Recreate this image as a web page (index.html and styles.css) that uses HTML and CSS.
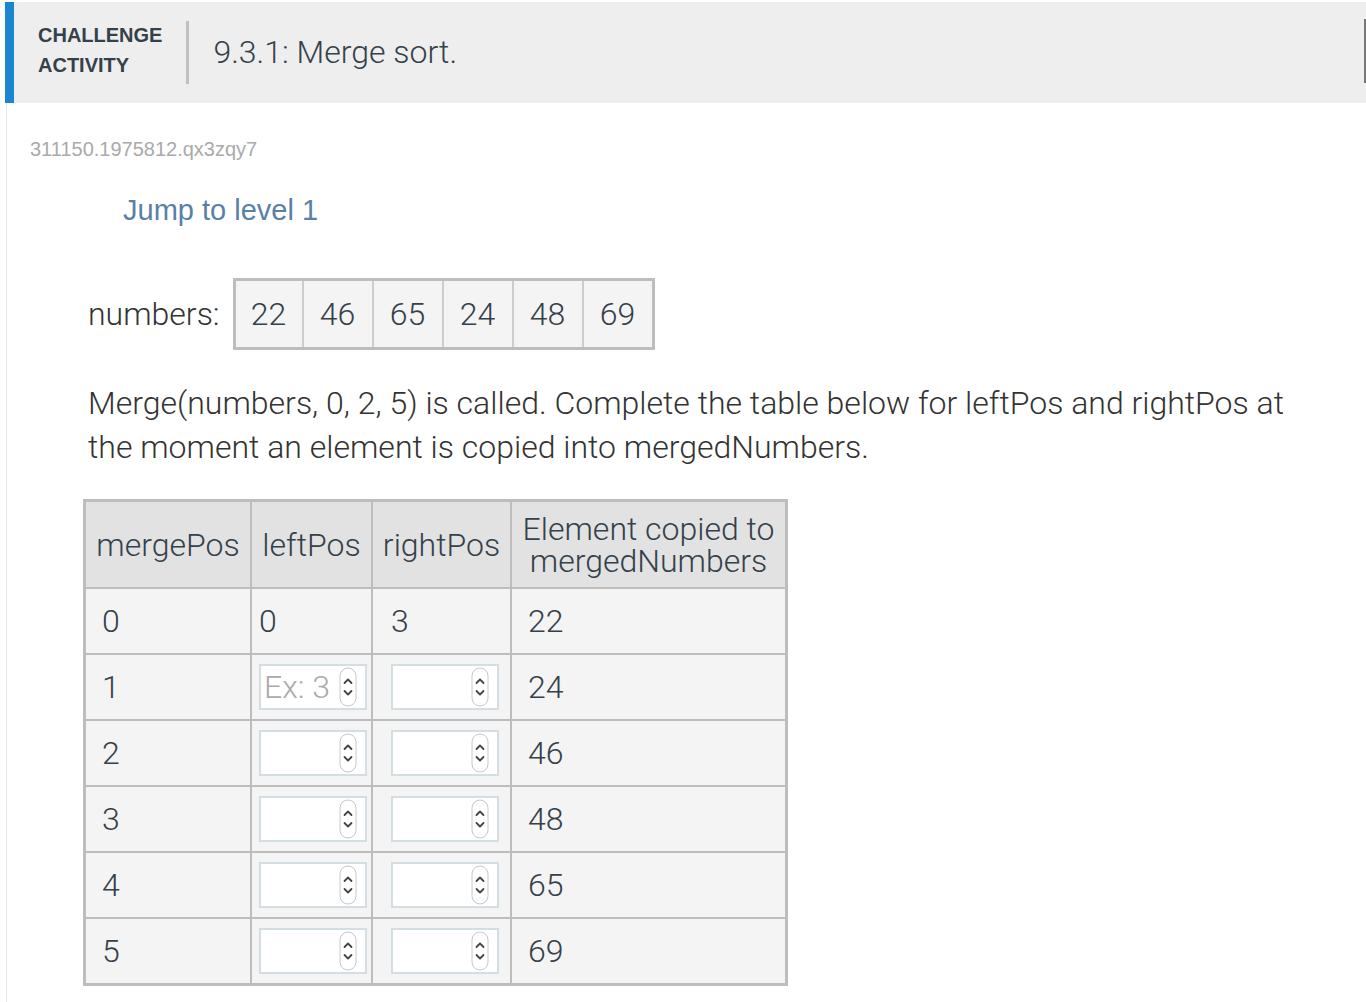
FILE: index.html
```html
<!DOCTYPE html>
<html>
<head>
<meta charset="utf-8">
<link rel="stylesheet" href="styles.css">
</head>
<body>
<div class="page">
  <header class="head">
    <div class="kind">CHALLENGE<br>ACTIVITY</div>
    <div class="sep"></div>
    <h1 class="title">9.3.1: Merge sort.</h1>
    <div class="edge"></div>
  </header>
  <section class="card">
    <div class="code">311150.1975812.qx3zqy7</div>
    <a class="jump">Jump to level 1</a>
    <div class="arr-row">
      <span class="arr-label">numbers:</span>
      <div class="arr">
        <div class="cell">22</div><div class="cell">46</div><div class="cell">65</div><div class="cell">24</div><div class="cell">48</div><div class="cell">69</div>
      </div>
    </div>
    <p class="prompt">Merge(numbers, 0, 2, 5) is called. Complete the table below for leftPos and rightPos at the moment an element is copied into mergedNumbers.</p>
    <table class="tbl">
      <thead>
        <tr><th class="c1">mergePos</th><th class="c2">leftPos</th><th class="c3">rightPos</th><th class="c4"><span class="hl">Element copied to</span><span class="hl">mergedNumbers</span></th></tr>
      </thead>
      <tbody>
        <tr><td>0</td><td>0</td><td>3</td><td>22</td></tr>
        <tr><td>1</td>
          <td><div class="num"><input type="text" placeholder="Ex: 3"><svg class="spin" width="18" height="40" viewBox="0 0 18 40"><rect x="1" y="1" width="16" height="38" rx="8" fill="#fff" stroke="#c8c8c8"/><path d="M5.5 16 L9 12.5 L12.5 16" fill="none" stroke="#444" stroke-width="1.8" stroke-linecap="round" stroke-linejoin="round"/><path d="M5.5 24 L9 27.5 L12.5 24" fill="none" stroke="#444" stroke-width="1.8" stroke-linecap="round" stroke-linejoin="round"/></svg></div></td>
          <td><div class="num"><input type="text"><svg class="spin" width="18" height="40" viewBox="0 0 18 40"><rect x="1" y="1" width="16" height="38" rx="8" fill="#fff" stroke="#c8c8c8"/><path d="M5.5 16 L9 12.5 L12.5 16" fill="none" stroke="#444" stroke-width="1.8" stroke-linecap="round" stroke-linejoin="round"/><path d="M5.5 24 L9 27.5 L12.5 24" fill="none" stroke="#444" stroke-width="1.8" stroke-linecap="round" stroke-linejoin="round"/></svg></div></td>
          <td>24</td></tr>
        <tr><td>2</td>
          <td><div class="num"><input type="text"><svg class="spin" width="18" height="40" viewBox="0 0 18 40"><rect x="1" y="1" width="16" height="38" rx="8" fill="#fff" stroke="#c8c8c8"/><path d="M5.5 16 L9 12.5 L12.5 16" fill="none" stroke="#444" stroke-width="1.8" stroke-linecap="round" stroke-linejoin="round"/><path d="M5.5 24 L9 27.5 L12.5 24" fill="none" stroke="#444" stroke-width="1.8" stroke-linecap="round" stroke-linejoin="round"/></svg></div></td>
          <td><div class="num"><input type="text"><svg class="spin" width="18" height="40" viewBox="0 0 18 40"><rect x="1" y="1" width="16" height="38" rx="8" fill="#fff" stroke="#c8c8c8"/><path d="M5.5 16 L9 12.5 L12.5 16" fill="none" stroke="#444" stroke-width="1.8" stroke-linecap="round" stroke-linejoin="round"/><path d="M5.5 24 L9 27.5 L12.5 24" fill="none" stroke="#444" stroke-width="1.8" stroke-linecap="round" stroke-linejoin="round"/></svg></div></td>
          <td>46</td></tr>
        <tr><td>3</td>
          <td><div class="num"><input type="text"><svg class="spin" width="18" height="40" viewBox="0 0 18 40"><rect x="1" y="1" width="16" height="38" rx="8" fill="#fff" stroke="#c8c8c8"/><path d="M5.5 16 L9 12.5 L12.5 16" fill="none" stroke="#444" stroke-width="1.8" stroke-linecap="round" stroke-linejoin="round"/><path d="M5.5 24 L9 27.5 L12.5 24" fill="none" stroke="#444" stroke-width="1.8" stroke-linecap="round" stroke-linejoin="round"/></svg></div></td>
          <td><div class="num"><input type="text"><svg class="spin" width="18" height="40" viewBox="0 0 18 40"><rect x="1" y="1" width="16" height="38" rx="8" fill="#fff" stroke="#c8c8c8"/><path d="M5.5 16 L9 12.5 L12.5 16" fill="none" stroke="#444" stroke-width="1.8" stroke-linecap="round" stroke-linejoin="round"/><path d="M5.5 24 L9 27.5 L12.5 24" fill="none" stroke="#444" stroke-width="1.8" stroke-linecap="round" stroke-linejoin="round"/></svg></div></td>
          <td>48</td></tr>
        <tr><td>4</td>
          <td><div class="num"><input type="text"><svg class="spin" width="18" height="40" viewBox="0 0 18 40"><rect x="1" y="1" width="16" height="38" rx="8" fill="#fff" stroke="#c8c8c8"/><path d="M5.5 16 L9 12.5 L12.5 16" fill="none" stroke="#444" stroke-width="1.8" stroke-linecap="round" stroke-linejoin="round"/><path d="M5.5 24 L9 27.5 L12.5 24" fill="none" stroke="#444" stroke-width="1.8" stroke-linecap="round" stroke-linejoin="round"/></svg></div></td>
          <td><div class="num"><input type="text"><svg class="spin" width="18" height="40" viewBox="0 0 18 40"><rect x="1" y="1" width="16" height="38" rx="8" fill="#fff" stroke="#c8c8c8"/><path d="M5.5 16 L9 12.5 L12.5 16" fill="none" stroke="#444" stroke-width="1.8" stroke-linecap="round" stroke-linejoin="round"/><path d="M5.5 24 L9 27.5 L12.5 24" fill="none" stroke="#444" stroke-width="1.8" stroke-linecap="round" stroke-linejoin="round"/></svg></div></td>
          <td>65</td></tr>
        <tr><td>5</td>
          <td><div class="num"><input type="text"><svg class="spin" width="18" height="40" viewBox="0 0 18 40"><rect x="1" y="1" width="16" height="38" rx="8" fill="#fff" stroke="#c8c8c8"/><path d="M5.5 16 L9 12.5 L12.5 16" fill="none" stroke="#444" stroke-width="1.8" stroke-linecap="round" stroke-linejoin="round"/><path d="M5.5 24 L9 27.5 L12.5 24" fill="none" stroke="#444" stroke-width="1.8" stroke-linecap="round" stroke-linejoin="round"/></svg></div></td>
          <td><div class="num"><input type="text"><svg class="spin" width="18" height="40" viewBox="0 0 18 40"><rect x="1" y="1" width="16" height="38" rx="8" fill="#fff" stroke="#c8c8c8"/><path d="M5.5 16 L9 12.5 L12.5 16" fill="none" stroke="#444" stroke-width="1.8" stroke-linecap="round" stroke-linejoin="round"/><path d="M5.5 24 L9 27.5 L12.5 24" fill="none" stroke="#444" stroke-width="1.8" stroke-linecap="round" stroke-linejoin="round"/></svg></div></td>
          <td>69</td></tr>
      </tbody>
    </table>
  </section>
</div>
</body>
</html>
```
FILE: styles.css
```css
html, body {
  margin: 0;
  padding: 0;
  background: #fff;
}
body {
  font-family: Roboto, "Liberation Sans", sans-serif;
  color: #333;
  overflow: hidden;
}
.page {
  padding: 2px 0 0 5px;
}
.head {
  display: flex;
  align-items: center;
  height: 101px;
  background: #eeeeee;
  border-left: 9px solid #1a86d0;
  padding-left: 24px;
}
.kind {
  font-family: "Liberation Sans", Arial, sans-serif;
  font-weight: 700;
  font-size: 20px;
  line-height: 30px;
  color: #34414a;
  margin-bottom: 6px;
}
.sep {
  width: 3px;
  height: 63px;
  background: #c0c0c0;
  margin: 0 24px 0 24px;
}
.title {
  margin: 0 0 2px 0;
  font-weight: 300;
  font-size: 32px;
  color: #34414a;
  flex: 1;
}
.edge {
  width: 2px;
  height: 64px;
  background: #777;
  margin-bottom: 4px;
}
.card {
  border-left: 1px solid #e4e4e4;
  margin-left: 1px;
  padding: 32px 0 20px 0;
}
.code {
  font-family: "Liberation Sans", Arial, sans-serif;
  font-size: 20px;
  color: #aaaaaa;
  padding-left: 23px;
  line-height: 28px;
}
.jump {
  display: block;
  font-family: "Liberation Sans", Arial, sans-serif;
  font-size: 29px;
  color: #5a80a7;
  margin: 29px 0 0 116px;
  line-height: 36px;
}
.arr-row {
  display: flex;
  align-items: center;
  margin: 50px 0 0 81px;
}
.arr-label {
  font-weight: 300;
  font-size: 32px;
  color: #333;
  margin-right: 13px;
}
.arr {
  display: flex;
  border: 3px solid #bdbdbd;
  background: #f4f4f4;
}
.cell {
  width: 68px;
  height: 65px;
  display: flex;
  align-items: center;
  justify-content: center;
  font-weight: 300;
  font-size: 32px;
  color: #34414a;
  border-left: 2px solid #cdcdcd;
  padding-bottom: 1px;
  box-sizing: content-box;
}
.cell:first-child {
  border-left: none;
  width: 66px;
}
.prompt {
  margin: 31px 60px 0 81px;
  font-weight: 300;
  font-size: 32px;
  line-height: 44px;
  color: #333;
}
.tbl {
  margin: 30px 0 0 76px;
  border-collapse: collapse;
  border: 3px solid #bdbdbd;
  background: #f4f4f4;
  color: #34414a;
  font-weight: 300;
  font-size: 32px;
}
.tbl th, .tbl td {
  border: 2px solid #bdbdbd;
  padding: 0;
}
.tbl th {
  background: #e2e2e2;
  font-weight: 300;
  line-height: 32px;
  height: 85px;
  padding: 0 8px;
  text-align: center;
}
.hl {
  display: block;
  height: 32px;
}
.tbl th.c1 { width: 144px; padding: 0 10px; }
.tbl th.c2 { width: 103px; }
.tbl th.c3 { width: 121px; }
.tbl th.c4 { width: 257px; }
.tbl td {
  height: 64px;
  padding-left: 16px;
  text-align: left;
}
.tbl td:nth-child(2) {
  padding-left: 7px;
}
.tbl td:nth-child(3) {
  padding-left: 18px;
}
.num {
  display: flex;
  align-items: center;
  width: 104px;
  height: 42px;
  border: 2px solid #d3dde2;
  background: #fff;
}
.num input {
  flex: 1;
  width: 60px;
  border: none;
  outline: none;
  background: transparent;
  font-family: Roboto, "Liberation Sans", sans-serif;
  font-weight: 300;
  font-size: 32px;
  color: #34414a;
  padding: 0 0 0 3px;
  margin: 0;
}
.num input::placeholder {
  color: #aaaaaa;
}
.spin {
  flex: none;
  margin-right: 8px;
}
```
